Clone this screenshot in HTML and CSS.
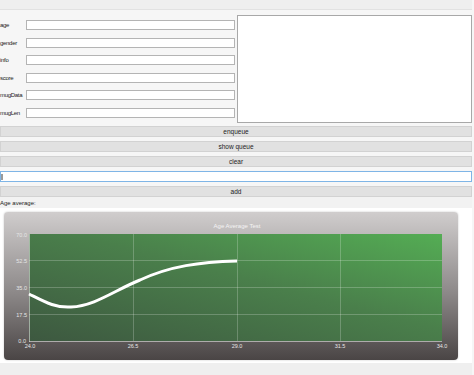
FILE: index.html
```html
<!DOCTYPE html>
<html lang="en">
<head>
    <meta charset="UTF-8">
    <meta name="viewport" content="width=device-width, initial-scale=1.0">
    <title>Queue Test</title>
    <link rel="stylesheet" href="styles.css">
</head>
<body>
    <div class="topbar"></div>
    <div class="form">
        <div class="fields">
            <div class="row"><label for="age">age</label><input type="text" id="age"></div>
            <div class="row"><label for="gender">gender</label><input type="text" id="gender"></div>
            <div class="row"><label for="info">info</label><input type="text" id="info"></div>
            <div class="row"><label for="score">score</label><input type="text" id="score"></div>
            <div class="row"><label for="mugData">mugData</label><input type="text" id="mugData"></div>
            <div class="row"><label for="mugLen">mugLen</label><input type="text" id="mugLen"></div>
        </div>
        <textarea class="output" id="output"></textarea>
    </div>
    <div class="actions">
        <button class="btn">enqueue</button>
        <button class="btn">show queue</button>
        <button class="btn">clear</button>
        <div class="line"><span class="caret"></span></div>
        <button class="btn">add</button>
    </div>
    <div class="caption">Age average:</div>
    <div class="chart-area">
        <div class="chart">
            <svg width="454" height="148" viewBox="0 0 454 148">
                <defs>
                    <linearGradient id="plotBg" x1="0" y1="1" x2="1" y2="0">
                        <stop offset="0" stop-color="#3d5840"/>
                        <stop offset="0.55" stop-color="#4a7f4b"/>
                        <stop offset="1" stop-color="#54ad54"/>
                    </linearGradient>
                </defs>
                <text class="title" x="233" y="16" text-anchor="middle">Age Average Test</text>
                <rect x="25" y="22" width="413" height="107" fill="url(#plotBg)"/>
                <g class="grid">
                    <line x1="25" y1="48.5" x2="438" y2="48.5"/>
                    <line x1="25" y1="75.5" x2="438" y2="75.5"/>
                    <line x1="25" y1="102.5" x2="438" y2="102.5"/>
                    <line x1="129.5" y1="22" x2="129.5" y2="129"/>
                    <line x1="233.5" y1="22" x2="233.5" y2="129"/>
                    <line x1="336.5" y1="22" x2="336.5" y2="129"/>
                </g>
                <g class="axis">
                    <line x1="25.5" y1="22" x2="25.5" y2="129.5"/>
                    <line x1="25" y1="129.5" x2="438" y2="129.5"/>
                </g>
                <g class="ylab" text-anchor="end">
                    <text x="23" y="25">70.0</text>
                    <text x="23" y="51">52.5</text>
                    <text x="23" y="78">35.0</text>
                    <text x="23" y="105">17.5</text>
                    <text x="22" y="131">0.0</text>
                </g>
                <g class="xlab" text-anchor="middle">
                    <text x="26" y="136">24.0</text>
                    <text x="129" y="136">26.5</text>
                    <text x="233" y="136">29.0</text>
                    <text x="336" y="136">31.5</text>
                    <text x="438" y="136">34.0</text>
                </g>
                <path class="curve" d="M25 82 C 41 90, 51 96, 67 95 C 91 94, 111 78, 136 68 C 166 54, 196 50, 233 49"/>
            </svg>
        </div>
    </div>
    <div class="bottombar"></div>
</body>
</html>
```

FILE: styles.css
```css
body {
    margin: 0;
    width: 472px;
    font-family: 'Liberation Sans', Arial, sans-serif;
    font-size: 7px;
    color: #222;
    background: #f6f6f6;
}
.topbar {
    height: 9px;
    background: #efefef;
    border-bottom: 1px solid #e2e2e2;
}
.form {
    display: flex;
    align-items: flex-start;
    padding: 5px 0 3px 0;
}
.fields {
    width: 237px;
    padding-top: 5px;
}
.row {
    display: flex;
    align-items: flex-start;
    height: 17.5px;
}
.row:last-child {
    height: 10px;
}
.row label {
    width: 26px;
    font-size: 6px;
    line-height: 10px;
    letter-spacing: -0.3px;
    white-space: nowrap;
}
.row input {
    box-sizing: border-box;
    width: 209px;
    height: 10px;
    margin: 0;
    padding: 0;
    border: 1px solid #b4b4b4;
    background: #fff;
}
.output {
    box-sizing: border-box;
    width: 235px;
    height: 108px;
    margin: 0;
    padding: 0;
    border: 1px solid #a8a8a8;
    background: #fff;
    resize: none;
}
.actions {
    display: flex;
    flex-direction: column;
    gap: 4px;
}
.btn {
    box-sizing: border-box;
    height: 11px;
    margin: 0;
    padding: 0;
    border: 1px solid #d2d2d2;
    background: #e1e1e1;
    font-family: 'Liberation Sans', Arial, sans-serif;
    font-size: 6.5px;
    color: #222;
}
.line {
    box-sizing: border-box;
    height: 11px;
    border: 1px solid #7fb5e6;
    background: #fff;
    display: flex;
    align-items: center;
}
.caret {
    width: 2px;
    height: 6px;
    background: #9a9a9a;
}
.caption {
    height: 11px;
    line-height: 12px;
    font-size: 6px;
    background: #f2f2f2;
}
.chart-area {
    background: #fff;
    padding: 4px 0 3px 4px;
}
.chart {
    width: 454px;
    height: 148px;
    border-radius: 4px;
    background: linear-gradient(#d0cdcd, #8c8888 55%, #4a4545);
    box-shadow: 0 0 2px rgba(0, 0, 0, 0.25);
    overflow: hidden;
}
.chart svg {
    display: block;
    font-family: 'Liberation Sans', Arial, sans-serif;
}
.title {
    fill: #f4f4f4;
    font-size: 6px;
}
.grid line {
    stroke: rgba(255, 255, 255, 0.22);
    stroke-width: 1;
}
.axis line {
    stroke: rgba(255, 255, 255, 0.5);
    stroke-width: 1;
}
.ylab text,
.xlab text {
    fill: #e6e6e6;
    font-size: 5.5px;
}
.curve {
    fill: none;
    stroke: #fff;
    stroke-width: 3;
    stroke-linecap: butt;
}
.bottombar {
    height: 12px;
    background: #efefef;
}
```
